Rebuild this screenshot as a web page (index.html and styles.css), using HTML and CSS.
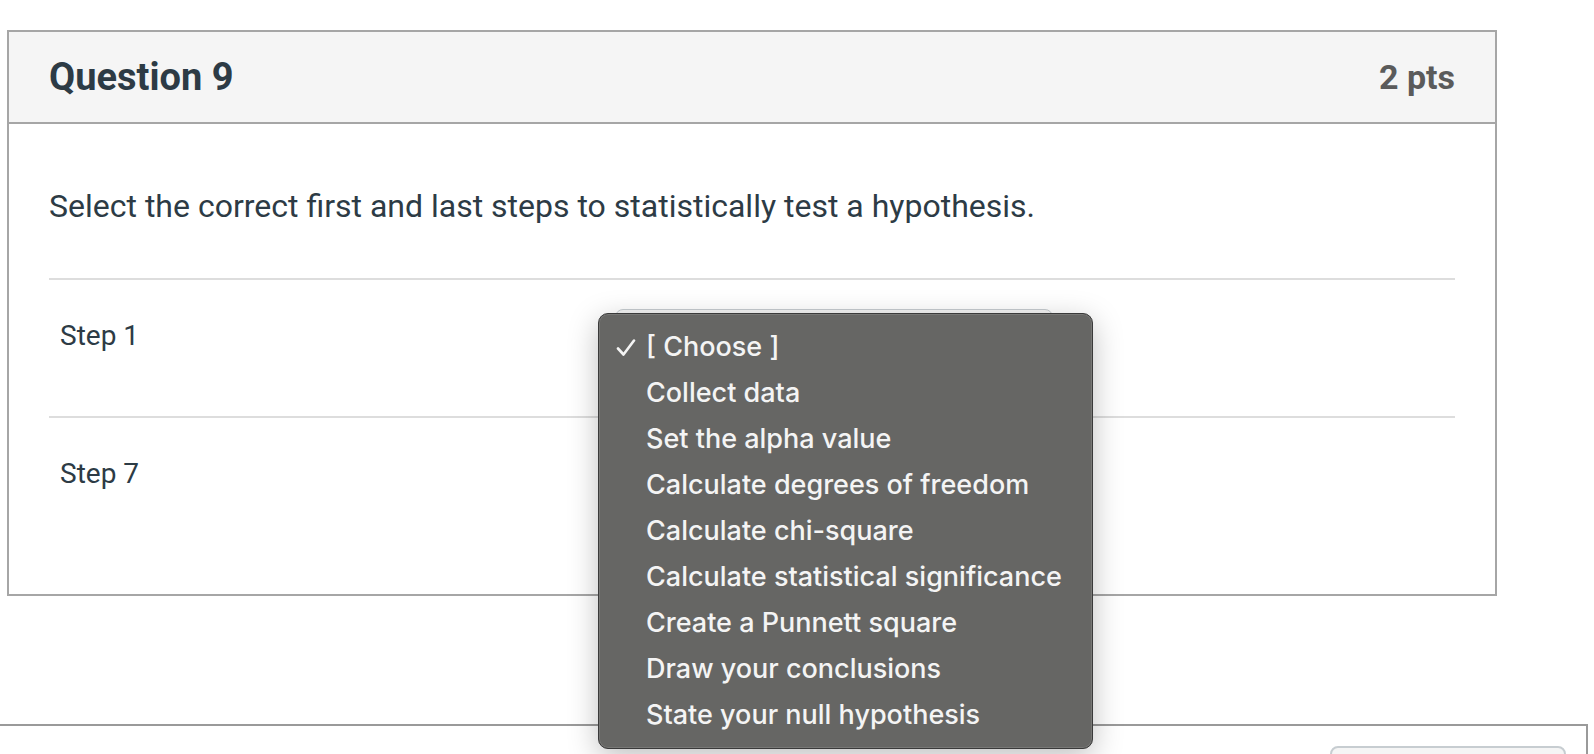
FILE: index.html
```html
<!DOCTYPE html>
<html lang="en">
<head>
  <meta charset="UTF-8" />
  <title>Question 9</title>
  <link rel="stylesheet" href="styles.css">
</head>
<body>
  <div class="question">
    <div class="question-header">
      <span class="question-name">Question 9</span>
      <span class="points">2 pts</span>
    </div>
    <div class="question-body">
      <p class="question-text">Select the correct first and last steps to statistically test a hypothesis.</p>
      <div class="answers">
        <div class="answer-row">
          <div class="answer-label">Step 1</div>
          <div class="select-wrap">
            <div class="select-box"></div>
            <ul class="select-menu">
              <li class="selected">
                <svg class="check" width="20" height="18" viewBox="0 0 20 18"><polyline points="2,9.5 7.5,15.5 18,1.5" fill="none" stroke="#f4f4f4" stroke-width="2.6" stroke-linecap="round" stroke-linejoin="round"/></svg>
                [ Choose ]
              </li>
              <li>Collect data</li>
              <li>Set the alpha value</li>
              <li>Calculate degrees of freedom</li>
              <li>Calculate chi-square</li>
              <li>Calculate statistical significance</li>
              <li>Create a Punnett square</li>
              <li>Draw your conclusions</li>
              <li>State your null hypothesis</li>
            </ul>
          </div>
        </div>
        <div class="answer-row">
          <div class="answer-label">Step 7</div>
          <div class="select-wrap">
            <div class="select-box"></div>
          </div>
        </div>
      </div>
    </div>
  </div>

  <div class="form-actions">
    <button class="action-btn"></button>
  </div>
</body>
</html>
```

FILE: styles.css
```css
html, body {
  height: 754px;
  overflow: hidden;
}
body {
  margin: 0;
  background: #fff;
  font-family: Roboto, "Liberation Sans", sans-serif;
  color: #2d3b45;
}
.question {
  margin: 30px 0 0 7px;
  width: 1486px;
  border: 2px solid #a6a6a6;
}
.question-header {
  height: 90px;
  background: #f5f5f5;
  border-bottom: 2px solid #a6a6a6;
  display: flex;
  justify-content: space-between;
  align-items: center;
  padding: 0 40px;
}
.question-name {
  font-size: 38px;
  font-weight: bold;
}
.points {
  font-size: 34px;
  font-weight: bold;
  color: #5b5b5b;
}
.question-body {
  padding: 0 40px 40px;
}
.question-text {
  margin: 0;
  padding: 63px 0 53px;
  font-size: 32px;
  line-height: 38px;
}
.answers {
  border-top: 2px solid #dddddd;
}
.answer-row {
  height: 136px;
  display: flex;
  align-items: flex-start;
}
.answer-row + .answer-row {
  border-top: 2px solid #dddddd;
}
.answer-label {
  width: 555px;
  padding: 39px 0 0 11px;
  font-size: 28px;
}
.select-wrap {
  position: relative;
  padding-top: 29px;
}
.select-box {
  width: 436px;
  height: 56px;
  border: 1px solid #c7cdd1;
  border-radius: 8px;
  background: #f5f5f5;
}
.select-menu {
  position: absolute;
  top: 33px;
  left: -17px;
  width: 493px;
  margin: 0;
  padding: 10px 0;
  list-style: none;
  background: #666664;
  border: 1px solid #3a3a3a;
  border-radius: 10px;
  box-shadow: 0 0 0 1px rgba(255,255,255,0.12) inset, 0 8px 30px rgba(0,0,0,0.25);
  font-family: Inter, "Noto Sans", sans-serif;
  font-size: 27px;
  font-weight: 500;
  color: #f4f4f4;
  z-index: 5;
}
.select-menu li {
  position: relative;
  height: 46px;
  line-height: 46px;
  padding-left: 47px;
  white-space: nowrap;
}
.select-menu .check {
  position: absolute;
  left: 17px;
  top: 15px;
}
.form-actions {
  margin-top: 128px;
  width: 1588px;
  height: 60px;
  border-top: 2px solid #9a9a9a;
  border-right: 2px solid #9a9a9a;
  box-sizing: border-box;
  display: flex;
  justify-content: flex-end;
  padding: 20px 20px 0 0;
}
.action-btn {
  width: 236px;
  height: 50px;
  border: 2px solid #c7cdd1;
  border-radius: 8px;
  background: #f5f5f5;
}
```
